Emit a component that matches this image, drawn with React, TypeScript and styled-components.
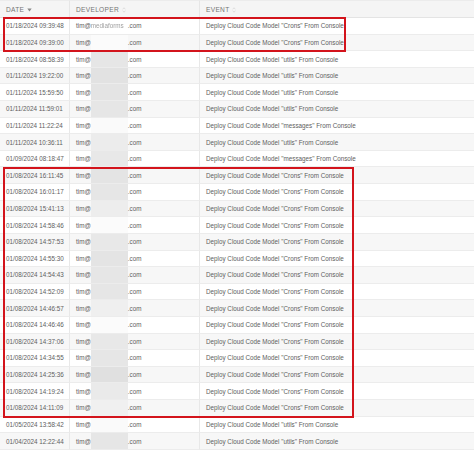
import React from "react";
import styled, { createGlobalStyle } from "styled-components";

const HEADER_H = 18;
const ROW_H = 16.62;

const Global = createGlobalStyle`
  html, body { margin: 0; padding: 0; background: #ffffff; }
  body { font-family: "Liberation Sans", Arial, sans-serif; }
`;

type Row = { date: string; model: string; shade: string | null };

const rows: Row[] = [
  { date: "01/18/2024 09:39:48", model: "Crons", shade: null },
  { date: "01/18/2024 09:39:00", model: "Crons", shade: "#fbfbfb" },
  { date: "01/18/2024 08:58:39", model: "utils", shade: "#e6e6e6" },
  { date: "01/11/2024 19:22:00", model: "utils", shade: "#e2e2e2" },
  { date: "01/11/2024 15:59:50", model: "utils", shade: "#e4e4e4" },
  { date: "01/11/2024 11:59:01", model: "utils", shade: "#e6e6e6" },
  { date: "01/11/2024 11:22:24", model: "messages", shade: "#fafafa" },
  { date: "01/11/2024 10:36:11", model: "utils", shade: "#ececec" },
  { date: "01/09/2024 08:18:47", model: "messages", shade: "#e8e8e8" },
  { date: "01/08/2024 16:11:45", model: "Crons", shade: "#e4e4e4" },
  { date: "01/08/2024 16:01:17", model: "Crons", shade: "#e6e6e6" },
  { date: "01/08/2024 15:41:13", model: "Crons", shade: "#ededed" },
  { date: "01/08/2024 14:58:46", model: "Crons", shade: "#fbfbfb" },
  { date: "01/08/2024 14:57:53", model: "Crons", shade: "#e8e8e8" },
  { date: "01/08/2024 14:55:30", model: "Crons", shade: "#e4e4e4" },
  { date: "01/08/2024 14:54:43", model: "Crons", shade: "#e6e6e6" },
  { date: "01/08/2024 14:52:09", model: "Crons", shade: "#e6e6e6" },
  { date: "01/08/2024 14:46:57", model: "Crons", shade: "#efefef" },
  { date: "01/08/2024 14:46:46", model: "Crons", shade: "#fbfbfb" },
  { date: "01/08/2024 14:37:06", model: "Crons", shade: "#e8e8e8" },
  { date: "01/08/2024 14:34:55", model: "Crons", shade: "#e6e6e6" },
  { date: "01/08/2024 14:25:36", model: "Crons", shade: "#e0e0e0" },
  { date: "01/08/2024 14:19:24", model: "Crons", shade: "#eaeaea" },
  { date: "01/08/2024 14:11:09", model: "Crons", shade: "#f0f0f0" },
  { date: "01/05/2024 13:58:42", model: "utils", shade: "#fafafa" },
  { date: "01/04/2024 12:22:44", model: "utils", shade: "#e6e6e6" },
];

const highlights = [
  { start: 0, count: 2, right: 346 },
  { start: 9, count: 15, right: 354 },
];

const Frame = styled.div`
  position: relative;
  width: 474px;
  height: 451px;
  overflow: hidden;
  background: #fff;
`;

const Table = styled.div`
  display: grid;
  grid-template-columns: 70px 130px 1fr;
  grid-auto-rows: ${ROW_H}px;
  grid-template-rows: ${HEADER_H}px;
`;

const HeadCell = styled.div<{ $last?: boolean }>`
  display: flex;
  align-items: center;
  gap: 3px;
  padding-left: 6px;
  padding-top: 1px;
  background: #f5f5f5;
  border-top: 1px solid #ececec;
  border-bottom: 1px solid #e4e4e4;
  border-right: ${(p) => (p.$last ? "none" : "1px solid #e6e6e6")};
  color: #767676;
  font-size: 6.6px;
  font-weight: 400;
  letter-spacing: 0.3px;
  text-transform: uppercase;
  box-sizing: border-box;
`;

const Cell = styled.div<{ $alt: boolean; $last?: boolean }>`
  display: flex;
  align-items: center;
  padding-left: 6px;
  background: ${(p) => (p.$alt ? "#f7f7f7" : "#ffffff")};
  border-bottom: 1px solid #ececec;
  border-right: ${(p) => (p.$last ? "none" : "1px solid #e8e8e8")};
  color: #5e5e5e;
  font-size: 6.3px;
  white-space: nowrap;
  box-sizing: border-box;
  overflow: hidden;
`;

const Redact = styled.span<{ $shade: string }>`
  display: inline-block;
  align-self: stretch;
  width: 37px;
  margin-top: -1px;
  margin-bottom: -1px;
  background: ${(p) => p.$shade};
`;

const Smudge = styled.span`
  display: inline-block;
  min-width: 37px;
  color: #a0a0a0;
  filter: blur(0.6px);
`;

const Highlight = styled.div`
  position: absolute;
  left: 3px;
  border: 2px solid #d3141c;
  box-sizing: border-box;
  pointer-events: none;
`;

const SortDown = () => (
  <svg width="5" height="4" viewBox="0 0 5 4">
    <path d="M0.3 0.6 L4.7 0.6 L2.5 3.4 Z" fill="#8a8a8a" />
  </svg>
);

const SortBoth = () => (
  <svg width="4" height="6" viewBox="0 0 4 6">
    <path d="M0.6 2.3 L2 0.8 L3.4 2.3 M0.6 3.7 L2 5.2 L3.4 3.7" fill="none" stroke="#d2d2d2" strokeWidth="0.7" />
  </svg>
);

export default function App() {
  return (
    <>
      <Global />
      <Frame>
        <Table>
          <HeadCell>
            Date <SortDown />
          </HeadCell>
          <HeadCell>
            Developer <SortBoth />
          </HeadCell>
          <HeadCell $last>
            Event <SortBoth />
          </HeadCell>
          {rows.map((r, i) => {
            const alt = i % 2 === 1;
            return (
              <React.Fragment key={r.date}>
                <Cell $alt={alt}>{r.date}</Cell>
                <Cell $alt={alt}>
                  tim@
                  {r.shade ? <Redact $shade={r.shade} /> : <Smudge>mediaforms</Smudge>}
                  .com
                </Cell>
                <Cell $alt={alt} $last>
                  Deploy Cloud Code Model "{r.model}" From Console
                </Cell>
              </React.Fragment>
            );
          })}
        </Table>
        {highlights.map((h) => (
          <Highlight
            key={h.start}
            style={{
              top: HEADER_H + h.start * ROW_H - 1,
              height: h.count * ROW_H + 2,
              width: h.right - 3,
            }}
          />
        ))}
      </Frame>
    </>
  );
}
